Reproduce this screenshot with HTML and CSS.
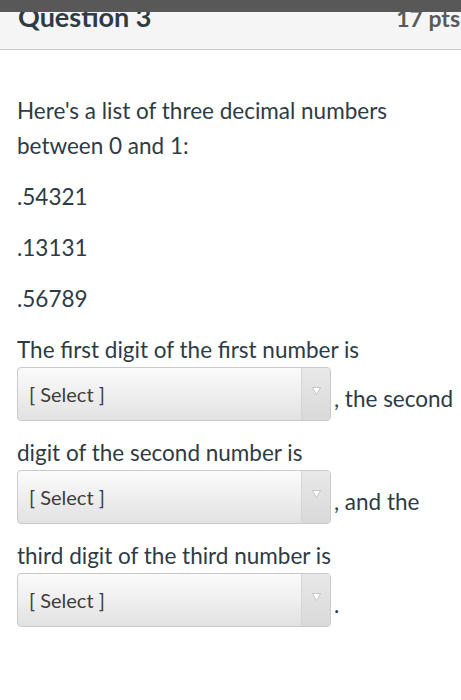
FILE: index.html
```html
<!DOCTYPE html>
<html>
<head>
<meta charset="utf-8">
<link rel="stylesheet" href="styles.css">
</head>
<body>
<div class="topbar"></div>
<div class="qheader">
  <div class="qheader-inner">
    <span class="qtitle">Question 3</span>
    <span class="qpts">17 pts</span>
  </div>
</div>
<div class="qbody">
  <p>Here's a list of three decimal numbers between 0 and 1:</p>
  <p>.54321</p>
  <p>.13131</p>
  <p>.56789</p>
  <p class="fill">The first digit of the first number is <span class="select"><span class="select-label">[ Select ]</span><span class="select-arrow"><svg width="9" height="8" viewBox="0 0 9 8"><path d="M0.5 0.5 L8.5 0.5 L4.5 7.5 Z" fill="#ffffff" stroke="#b5b5b5" stroke-width="0.7"/></svg></span></span>, the second digit of the second number is <span class="select"><span class="select-label">[ Select ]</span><span class="select-arrow"><svg width="9" height="8" viewBox="0 0 9 8"><path d="M0.5 0.5 L8.5 0.5 L4.5 7.5 Z" fill="#ffffff" stroke="#b5b5b5" stroke-width="0.7"/></svg></span></span>, and the third digit of the third number is <span class="select"><span class="select-label">[ Select ]</span><span class="select-arrow"><svg width="9" height="8" viewBox="0 0 9 8"><path d="M0.5 0.5 L8.5 0.5 L4.5 7.5 Z" fill="#ffffff" stroke="#b5b5b5" stroke-width="0.7"/></svg></span></span>.</p>
</div>
</body>
</html>
```
FILE: styles.css
```css
html, body {
  margin: 0;
  padding: 0;
  background: #ffffff;
}
body {
  font-family: Lato, "Open Sans", sans-serif;
  color: #2d3b45;
}
.topbar {
  height: 12px;
  background: #585858;
}
.qheader {
  height: 37px;
  overflow: hidden;
  background: #f5f5f5;
  border-bottom: 1px solid #c8c8c8;
}
.qheader-inner {
  display: flex;
  justify-content: space-between;
  align-items: baseline;
  margin-top: -11px;
  padding: 0 1px 0 18px;
}
.qtitle {
  font-size: 27px;
  font-weight: 700;
  line-height: 1.2;
  color: #2d3b45;
}
.qpts {
  font-size: 23px;
  font-weight: 700;
  color: #5a5a5a;
}
.qbody {
  padding: 27px 5px 0 17px;
}
.qbody p {
  margin: 16px 0;
  font-size: 22.5px;
  line-height: 35px;
}
.select {
  display: inline-flex;
  width: 314px;
  height: 54px;
  box-sizing: border-box;
  border: 1px solid #cacaca;
  border-radius: 4px;
  background: linear-gradient(#fbfbfb, #e2e2e2);
  vertical-align: 5px;
  margin: 0 3px 14px 0;
  overflow: hidden;
}
.select-label {
  flex: 1;
  padding-left: 11px;
  font-size: 20px;
  line-height: 52px;
  color: #3d3d3d;
}
.select-arrow {
  width: 29px;
  display: flex;
  justify-content: center;
  align-items: flex-start;
  padding-top: 19px;
  box-sizing: border-box;
  border-left: 1px solid #d6d6d6;
  background: linear-gradient(#e8e8e8, #d9d9d9);
}
.select-arrow svg {
  display: block;
}
```
